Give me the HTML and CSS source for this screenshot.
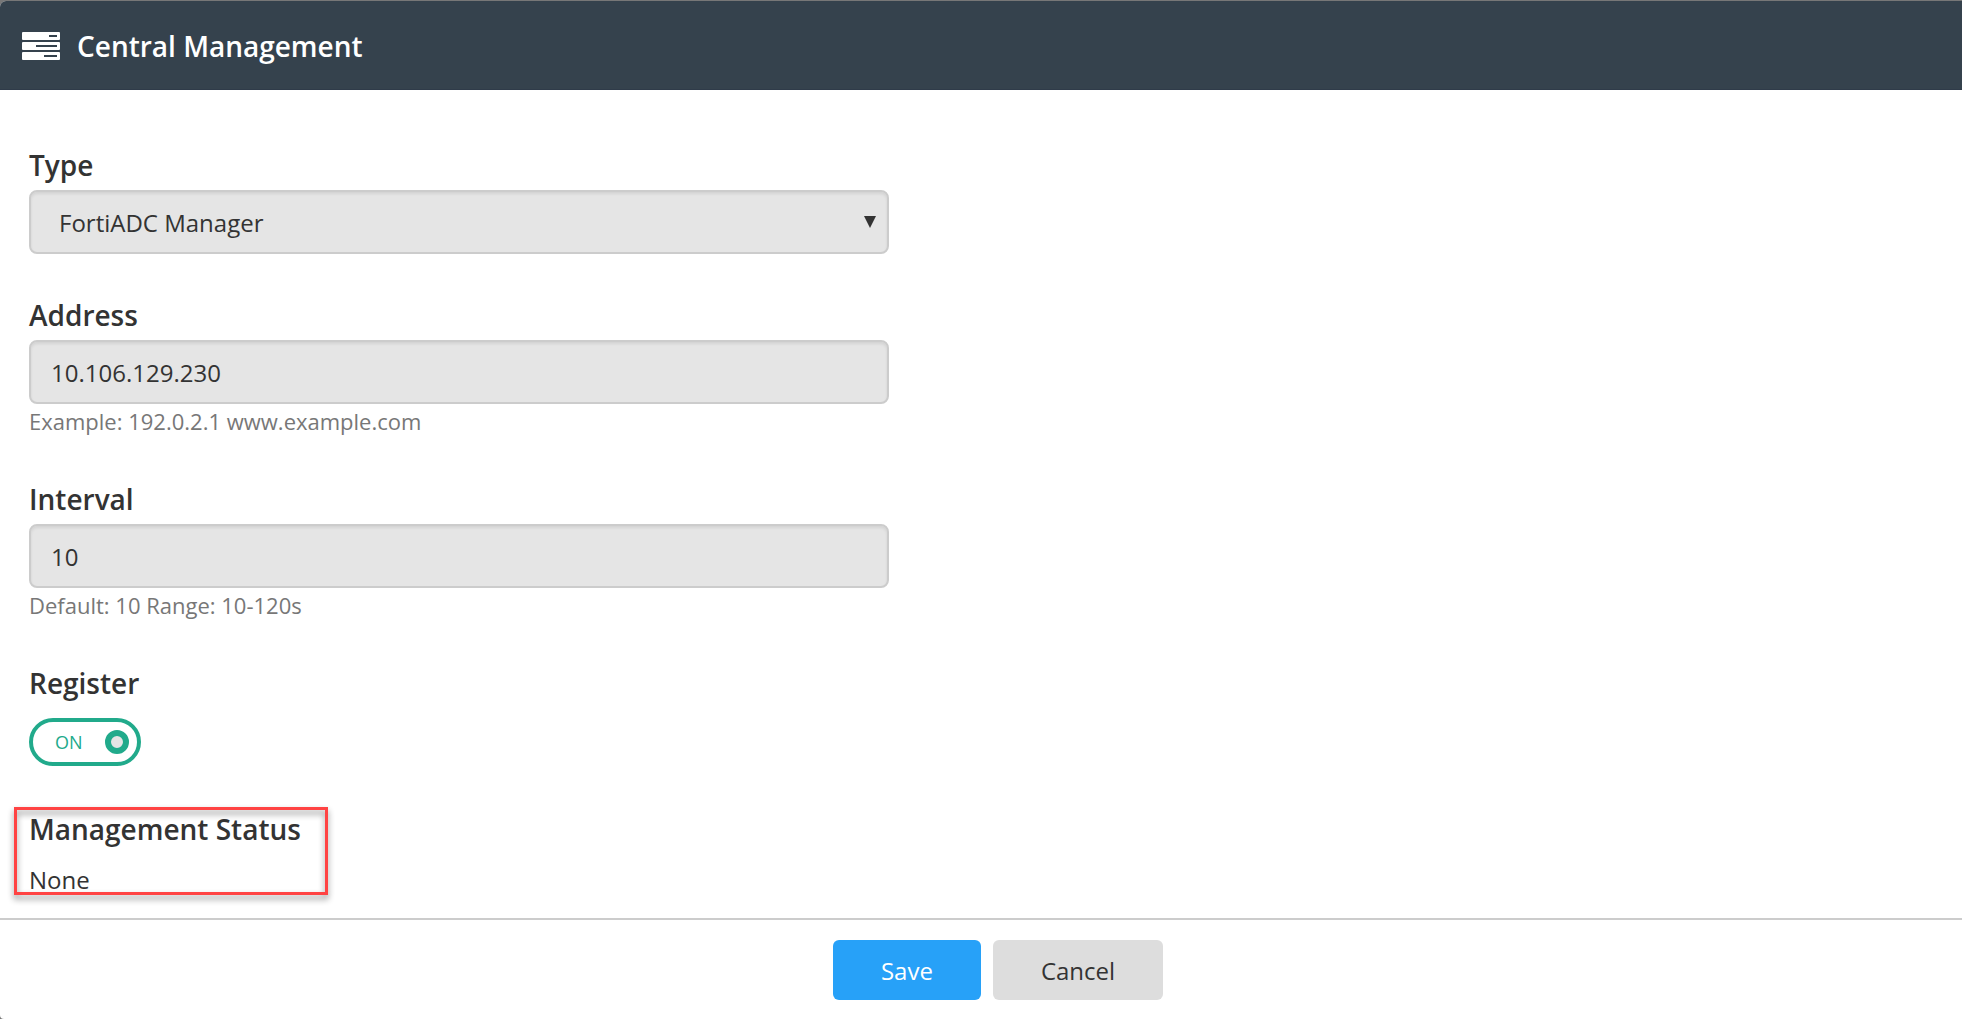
FILE: index.html
```html
<!DOCTYPE html>
<html lang="en">
<head>
    <meta charset="UTF-8">
    <meta name="viewport" content="width=device-width, initial-scale=1.0">
    <title>Central Management</title>
    <link rel="stylesheet" href="styles.css">
</head>
<body>
    <form class="dialog">
        <header class="dialog-header">
            <svg class="header-icon" width="38" height="30" viewBox="0 0 38 30" aria-hidden="true">
                <g fill="#ffffff">
                    <rect x="0" y="1" width="38" height="8" rx="1"/>
                    <rect x="0" y="11" width="38" height="8" rx="1"/>
                    <rect x="0" y="21" width="38" height="8" rx="1"/>
                </g>
                <g fill="#35424d">
                    <rect x="27" y="4" width="8" height="2"/>
                    <rect x="14" y="14" width="21" height="2"/>
                    <rect x="22" y="24" width="13" height="2"/>
                </g>
            </svg>
            <h1 class="dialog-title">Central Management</h1>
        </header>

        <main class="dialog-body">
            <div class="field">
                <label class="field-label" for="type">Type</label>
                <div class="select-wrap">
                    <select class="control select" id="type">
                        <option>FortiADC Manager</option>
                    </select>
                    <svg class="select-arrow" width="12" height="12" viewBox="0 0 12 12" aria-hidden="true">
                        <path d="M0 0h12L6 12z" fill="#333333"/>
                    </svg>
                </div>
            </div>

            <div class="field">
                <label class="field-label" for="address">Address</label>
                <input class="control" id="address" type="text" value="10.106.129.230" readonly>
                <p class="hint">Example: 192.0.2.1 www.example.com</p>
            </div>

            <div class="field">
                <label class="field-label" for="interval">Interval</label>
                <input class="control" id="interval" type="text" value="10" readonly>
                <p class="hint">Default: 10 Range: 10-120s</p>
            </div>

            <div class="field">
                <label class="field-label" for="register">Register</label>
                <label class="toggle">
                    <span class="toggle-text">ON</span>
                    <input class="toggle-knob" id="register" type="checkbox" checked>
                </label>
            </div>

            <div class="field status">
                <h2 class="field-label">Management Status</h2>
                <p class="status-value">None</p>
            </div>
        </main>

        <footer class="dialog-footer">
            <button class="btn btn-save" type="button">Save</button>
            <button class="btn btn-cancel" type="button">Cancel</button>
        </footer>
    </form>
</body>
</html>
```

FILE: styles.css
```css
* {
    margin: 0;
    padding: 0;
    box-sizing: border-box;
}

body {
    background-color: #777777;
    color: #333333;
    font-family: "Open Sans", sans-serif;
    font-size: 24px;
    padding-top: 1px;
}

.dialog {
    display: flex;
    flex-direction: column;
    min-height: calc(100vh - 1px);
    background-color: #ffffff;
    border-radius: 6px 0 0 4px;
    overflow: hidden;
}

.dialog-header {
    display: flex;
    align-items: center;
    gap: 17px;
    height: 89px;
    padding: 2px 22px 0;
    background-color: #35424d;
    border-bottom: 1px solid #2f3b49;
    color: #ffffff;
}

.dialog-title {
    font-size: 28px;
    font-weight: 600;
    line-height: 42px;
}

.dialog-body {
    flex: 1;
    display: flex;
    flex-direction: column;
    gap: 40px;
    padding: 54px 29px 18px;
}

.field {
    display: flex;
    flex-direction: column;
    width: 100%;
    max-width: 860px;
}

.field-label {
    align-self: flex-start;
    margin-bottom: 4px;
    font-size: 28px;
    font-weight: 600;
    line-height: 42px;
}

.control {
    width: 100%;
    height: 64px;
    padding: 0 20px;
    background-color: #e5e5e5;
    border: 2px solid #cccccc;
    border-radius: 8px;
    box-shadow: inset 0 2px 3px rgba(0, 0, 0, 0.08);
    color: #333333;
    font-family: inherit;
    font-size: 24px;
}

.select-wrap {
    position: relative;
}

.select {
    display: block;
    appearance: none;
    padding: 0 28px;
}

.select-arrow {
    position: absolute;
    right: 13px;
    top: 26px;
    pointer-events: none;
}

.hint {
    color: #777777;
    font-size: 22px;
    line-height: 34px;
}

.toggle {
    display: flex;
    align-items: center;
    justify-content: space-between;
    width: 112px;
    height: 48px;
    margin: 10px 0 2px;
    padding: 0 8px 0 22px;
    border: 4px solid #21aa8b;
    border-radius: 24px;
    color: #21aa8b;
    font-size: 18px;
    cursor: pointer;
}

.toggle-knob {
    appearance: none;
    width: 24px;
    height: 24px;
    background-color: #e5e5e5;
    border: 6px solid #21aa8b;
    border-radius: 50%;
    cursor: pointer;
}

.status {
    position: relative;
    width: fit-content;
}

.status .field-label {
    margin-bottom: 10px;
}

.status-value {
    line-height: 40px;
}

/* red frame over the status block */
.status::after {
    content: "";
    position: absolute;
    top: -1px;
    right: -27px;
    bottom: 5px;
    left: -15px;
    border: 3px solid #ff4343;
    filter: drop-shadow(0 4px 3px rgba(0, 0, 0, 0.45));
    pointer-events: none;
}

.dialog-footer {
    display: flex;
    justify-content: center;
    gap: 12px;
    padding: 20px 0 19px 34px;
    border-top: 2px solid #cccccc;
}

.btn {
    height: 60px;
    padding: 0 48px;
    border: none;
    border-radius: 6px;
    font-family: inherit;
    font-size: 24px;
    cursor: pointer;
}

.btn-save {
    background-color: #27a1f8;
    color: #ffffff;
}

.btn-cancel {
    background-color: #dddddd;
    color: #333333;
}
```
